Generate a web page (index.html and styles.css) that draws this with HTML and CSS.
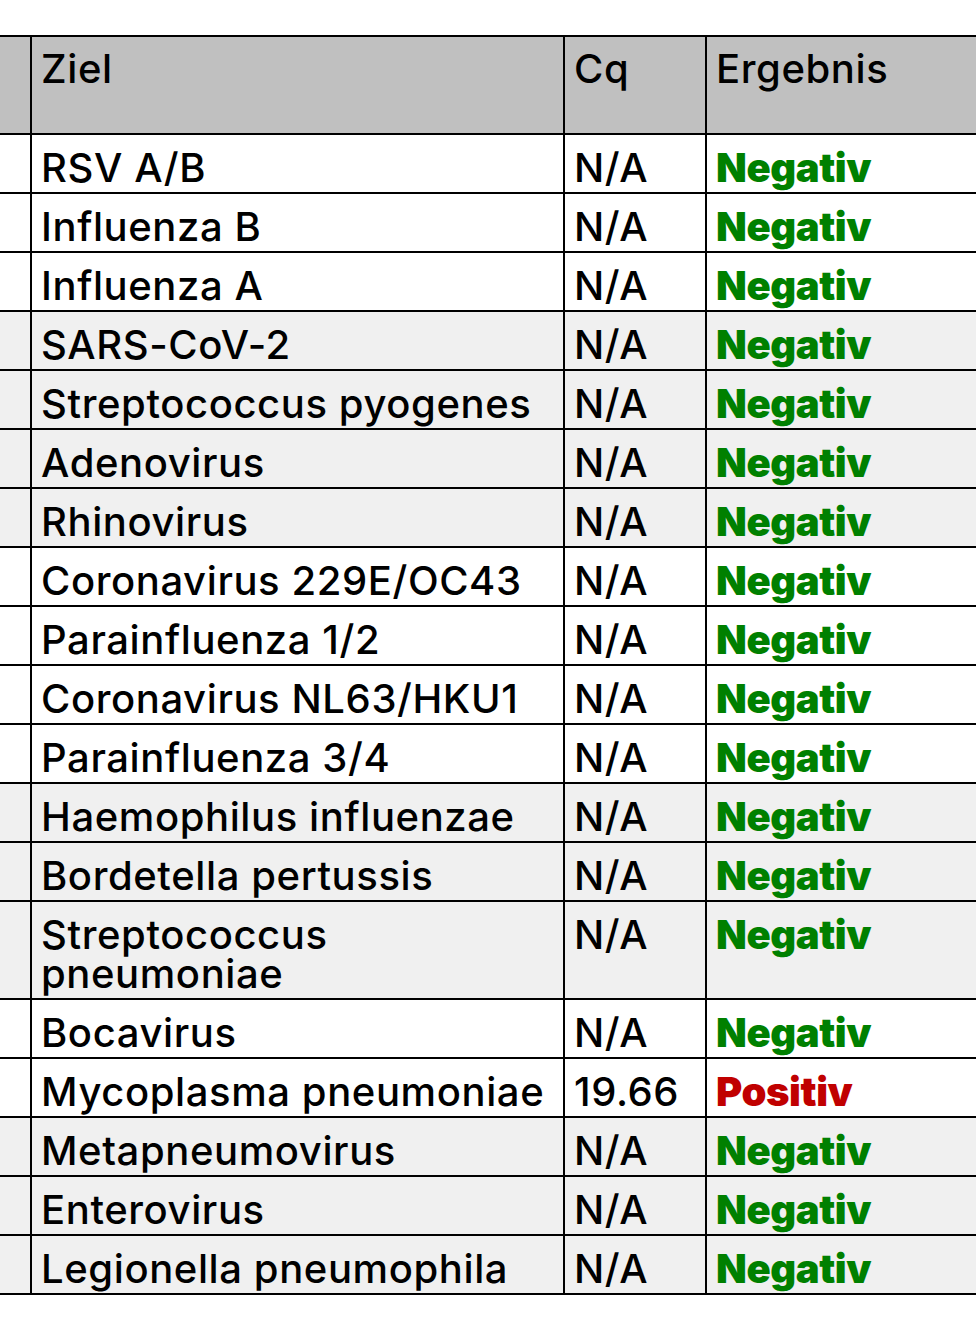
FILE: index.html
```html
<!DOCTYPE html>
<html lang="de">
<head>
<meta charset="utf-8">
<title>Ergebnisse</title>
<link rel="stylesheet" href="styles.css">
</head>
<body>
<div class="page">
<table class="results">
  <colgroup>
    <col class="c-lead"><col class="c-ziel"><col class="c-cq"><col class="c-erg">
  </colgroup>
  <thead>
    <tr class="head"><th class="lead"></th><th>Ziel</th><th>Cq</th><th>Ergebnis</th></tr>
  </thead>
  <tbody>
    <tr class="w"><td class="lead"></td><td>RSV A/B</td><td>N/A</td><td class="neg">Negativ</td></tr>
    <tr class="w"><td class="lead"></td><td>Influenza B</td><td>N/A</td><td class="neg">Negativ</td></tr>
    <tr class="w"><td class="lead"></td><td>Influenza A</td><td>N/A</td><td class="neg">Negativ</td></tr>
    <tr class="g"><td class="lead"></td><td>SARS-CoV-2</td><td>N/A</td><td class="neg">Negativ</td></tr>
    <tr class="g"><td class="lead"></td><td>Streptococcus pyogenes</td><td>N/A</td><td class="neg">Negativ</td></tr>
    <tr class="g"><td class="lead"></td><td>Adenovirus</td><td>N/A</td><td class="neg">Negativ</td></tr>
    <tr class="g"><td class="lead"></td><td>Rhinovirus</td><td>N/A</td><td class="neg">Negativ</td></tr>
    <tr class="w"><td class="lead"></td><td>Coronavirus 229E/OC43</td><td>N/A</td><td class="neg">Negativ</td></tr>
    <tr class="w"><td class="lead"></td><td>Parainfluenza 1/2</td><td>N/A</td><td class="neg">Negativ</td></tr>
    <tr class="w"><td class="lead"></td><td>Coronavirus NL63/HKU1</td><td>N/A</td><td class="neg">Negativ</td></tr>
    <tr class="w"><td class="lead"></td><td>Parainfluenza 3/4</td><td>N/A</td><td class="neg">Negativ</td></tr>
    <tr class="g"><td class="lead"></td><td>Haemophilus influenzae</td><td>N/A</td><td class="neg">Negativ</td></tr>
    <tr class="g"><td class="lead"></td><td>Bordetella pertussis</td><td>N/A</td><td class="neg">Negativ</td></tr>
    <tr class="g"><td class="lead"></td><td><span class="line">Streptococcus</span><span class="line">pneumoniae</span></td><td>N/A</td><td class="neg">Negativ</td></tr>
    <tr class="w"><td class="lead"></td><td>Bocavirus</td><td>N/A</td><td class="neg">Negativ</td></tr>
    <tr class="w"><td class="lead"></td><td>Mycoplasma pneumoniae</td><td>19.66</td><td class="pos">Positiv</td></tr>
    <tr class="g"><td class="lead"></td><td>Metapneumovirus</td><td>N/A</td><td class="neg">Negativ</td></tr>
    <tr class="g"><td class="lead"></td><td>Enterovirus</td><td>N/A</td><td class="neg">Negativ</td></tr>
    <tr class="g"><td class="lead"></td><td>Legionella pneumophila</td><td>N/A</td><td class="neg">Negativ</td></tr>
  </tbody>
</table>
</div>
</body>
</html>
```

FILE: styles.css
```css
html, body {
  margin: 0;
  padding: 0;
  background: #ffffff;
}
body {
  overflow: hidden;
  font-family: "Inter", "Liberation Sans", sans-serif;
  color: #000;
}
.page {
  width: 976px;
  height: 1338px;
  overflow: hidden;
  padding-top: 35px;
  box-sizing: border-box;
}
.results {
  border-collapse: collapse;
  table-layout: fixed;
  width: 1120px;
  font-size: 40px;
  line-height: 39px;
  letter-spacing: 0.6px;
}
.c-lead { width: 31px; }
.c-ziel { width: 533px; }
.c-cq { width: 142px; }
.c-erg { width: 414px; }
.results th, .results td {
  border: 2px solid #000;
  padding: 13px 9px 5px 9px;
  text-align: left;
  vertical-align: top;
  font-weight: 500;
  white-space: nowrap;
}
.results .lead { border-left: none; padding: 0; }
.line { display: block; }
.head th {
  background: #c0c0c0;
  height: 77px;
  padding-top: 12px;
  padding-bottom: 7px;
}
.w td { background: #ffffff; }
.g td { background: #f0f0f0; }
.results .neg { color: #008000; font-weight: 900; letter-spacing: -0.4px; }
.results .pos { color: #c00000; font-weight: 900; letter-spacing: -0.4px; }
```
